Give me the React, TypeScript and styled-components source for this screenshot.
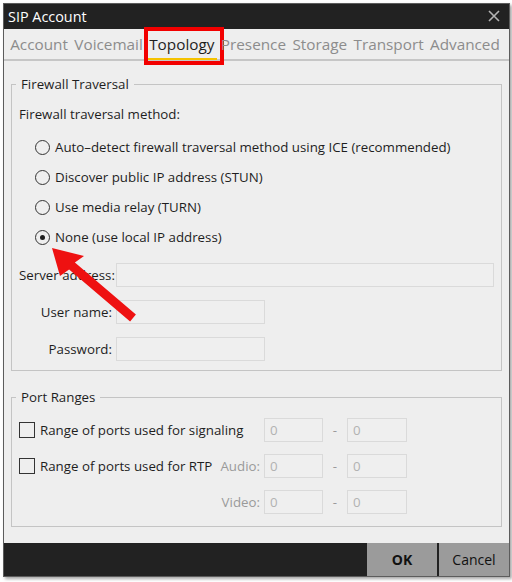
import React from "react";
import styled, { createGlobalStyle } from "styled-components";

const FONT = `"Open Sans", "Noto Sans", "Liberation Sans", sans-serif`;
const TEXT = "13.3px";

const TABS = ["Account", "Voicemail", "Topology", "Presence", "Storage", "Transport", "Advanced"];

const METHODS = [
  "Auto–detect firewall traversal method using ICE (recommended)",
  "Discover public IP address (STUN)",
  "Use media relay (TURN)",
  "None (use local IP address)",
];

const PORT_ROWS = [
  { label: "Range of ports used for signaling", sub: "" },
  { label: "Range of ports used for RTP", sub: "Audio:" },
  { label: "", sub: "Video:" },
];

export default function App() {
  return (
    <Page>
      <GlobalStyle />
      <Window>
        <TitleBar>
          <Title>SIP Account</Title>
          <CloseIcon width="12" height="12" viewBox="0 0 12 12">
            <path d="M1 1 L11 11 M11 1 L1 11" stroke="#b4b4b4" strokeWidth="1.6" />
          </CloseIcon>
        </TitleBar>
        <TabBar>
          {TABS.map((t) => (
            <Tab key={t} $active={t === "Topology"}>
              {t}
            </Tab>
          ))}
        </TabBar>
        <Content>
          <Group>
            <Legend>Firewall Traversal</Legend>
            <MethodLabel>Firewall traversal method:</MethodLabel>
            <RadioList>
              {METHODS.map((m, i) => (
                <RadioRow key={m}>
                  <Radio $checked={i === 3} />
                  {m}
                </RadioRow>
              ))}
            </RadioList>
            <ServerGrid>
              <FieldLabel>Server address:</FieldLabel>
              <Input />
              <FieldLabel>User name:</FieldLabel>
              <Input $width={149} />
              <FieldLabel>Password:</FieldLabel>
              <Input $width={149} />
            </ServerGrid>
          </Group>
          <Group $ports>
            <Legend>Port Ranges</Legend>
            <PortGrid>
              {PORT_ROWS.map((r, i) => (
                <React.Fragment key={i}>
                  {r.label ? <Checkbox /> : <span />}
                  <PortLabel>{r.label}</PortLabel>
                  <SubLabel>{r.sub}</SubLabel>
                  <Input>0</Input>
                  <Dash>-</Dash>
                  <Input>0</Input>
                </React.Fragment>
              ))}
            </PortGrid>
          </Group>
        </Content>
        <Footer>
          <FooterButton $primary>OK</FooterButton>
          <FooterButton>Cancel</FooterButton>
        </Footer>
      </Window>
      <ArrowOverlay width="512" height="582" viewBox="0 0 512 582">
        <polygon
          points="52,248 84,256 74.9,262.6 135.9,314.6 130.1,321.4 69.1,269.4 60,276"
          fill="#ee1111"
        />
      </ArrowOverlay>
    </Page>
  );
}

const GlobalStyle = createGlobalStyle`
  html, body {
    margin: 0;
    background: #ffffff;
  }
  * {
    box-sizing: border-box;
  }
`;

const Page = styled.div`
  position: relative;
  width: 512px;
  height: 582px;
  padding: 3px;
  font-family: ${FONT};
`;

const Window = styled.div`
  width: 507px;
  height: 574px;
  display: flex;
  flex-direction: column;
  background: #eeeeee;
  border: 1px solid #5c5c5c;
  box-shadow: 2px 2px 3px rgba(0, 0, 0, 0.35);
`;

const TitleBar = styled.div`
  height: 25px;
  flex: none;
  display: flex;
  align-items: center;
  justify-content: space-between;
  padding: 0 9px 1px 4px;
  background: #222222;
`;

const Title = styled.div`
  color: #ffffff;
  font-size: 14.4px;
`;

const CloseIcon = styled.svg`
  display: block;
`;

const TabBar = styled.div`
  height: 32px;
  flex: none;
  display: flex;
  align-items: center;
  padding-left: 3px;
  border-bottom: 2px solid #c6c6c6;
`;

const Tab = styled.div<{ $active?: boolean }>`
  position: relative;
  height: 100%;
  display: flex;
  align-items: center;
  padding: 0 3.2px;
  font-size: 15.3px;
  white-space: nowrap;
  color: ${(p) => (p.$active ? "#1e1e1e" : "#8c8c8c")};
  ${(p) =>
    p.$active &&
    `
    &::before {
      content: "";
      position: absolute;
      left: 1px;
      right: 1px;
      bottom: -1px;
      height: 2px;
      background: #f5c200;
    }
    &::after {
      content: "";
      position: absolute;
      top: -2px;
      left: -2px;
      right: -6px;
      bottom: -6px;
      border: 4px solid #f20000;
    }
  `}
`;

const Content = styled.div`
  flex: 1;
  display: flex;
  flex-direction: column;
  gap: 17px;
  padding: 14px 7px 0 7px;
`;

const Group = styled.fieldset<{ $ports?: boolean }>`
  margin: 0;
  min-width: 0;
  padding: 0 7px ${(p) => (p.$ports ? "12px" : "9px")} 7px;
  border: 1px solid #c4c4c4;
`;

const Legend = styled.legend`
  margin-left: -3px;
  padding: 0 5px;
  font-size: ${TEXT};
  line-height: 18px;
  color: #1e1e1e;
`;

const MethodLabel = styled.div`
  margin-top: 12px;
  font-size: ${TEXT};
  line-height: 18px;
  color: #1e1e1e;
`;

const RadioList = styled.div`
  margin: 9px 0 0 16px;
  display: flex;
  flex-direction: column;
`;

const RadioRow = styled.div`
  height: 30px;
  display: flex;
  align-items: center;
  gap: 5px;
  font-size: ${TEXT};
  color: #1e1e1e;
`;

const Radio = styled.span<{ $checked?: boolean }>`
  width: 15px;
  height: 15px;
  flex: none;
  border: 1px solid #333333;
  border-radius: 50%;
  display: flex;
  align-items: center;
  justify-content: center;
  &::after {
    content: "";
    width: 5px;
    height: 5px;
    border-radius: 50%;
    background: ${(p) => (p.$checked ? "#1e1e1e" : "transparent")};
  }
`;

const ServerGrid = styled.div`
  margin-top: 11px;
  display: grid;
  grid-template-columns: 93px 1fr;
  column-gap: 4px;
  row-gap: 13px;
  align-items: center;
`;

const FieldLabel = styled.div`
  text-align: right;
  font-size: ${TEXT};
  color: #1e1e1e;
  white-space: nowrap;
`;

const Input = styled.div<{ $width?: number }>`
  height: 24px;
  width: ${(p) => (p.$width ? `${p.$width}px` : "auto")};
  display: flex;
  align-items: center;
  padding-left: 5px;
  background: #efefef;
  border: 1px solid #dadada;
  font-size: ${TEXT};
  color: #b2b2b2;
`;

const PortGrid = styled.div`
  margin-top: 12px;
  display: grid;
  grid-template-columns: 21px 180px 44px 59px 24px 60px;
  row-gap: 12px;
  align-items: center;
`;

const Checkbox = styled.span`
  width: 16px;
  height: 16px;
  border: 1px solid #333333;
`;

const PortLabel = styled.div`
  font-size: ${TEXT};
  color: #1e1e1e;
  white-space: nowrap;
`;

const SubLabel = styled.div`
  text-align: right;
  padding-right: 4px;
  font-size: ${TEXT};
  color: #9a9a9a;
`;

const Dash = styled.div`
  text-align: center;
  font-size: ${TEXT};
  color: #9a9a9a;
`;

const Footer = styled.div`
  height: 33px;
  flex: none;
  display: flex;
  justify-content: flex-end;
  gap: 2px;
  background: #222222;
`;

const FooterButton = styled.div<{ $primary?: boolean }>`
  width: 70px;
  display: flex;
  align-items: center;
  justify-content: center;
  background: #9b9b9b;
  font-size: 14px;
  font-weight: ${(p) => (p.$primary ? 700 : 400)};
  color: #111111;
`;

const ArrowOverlay = styled.svg`
  position: absolute;
  left: 0;
  top: 0;
  pointer-events: none;
`;
